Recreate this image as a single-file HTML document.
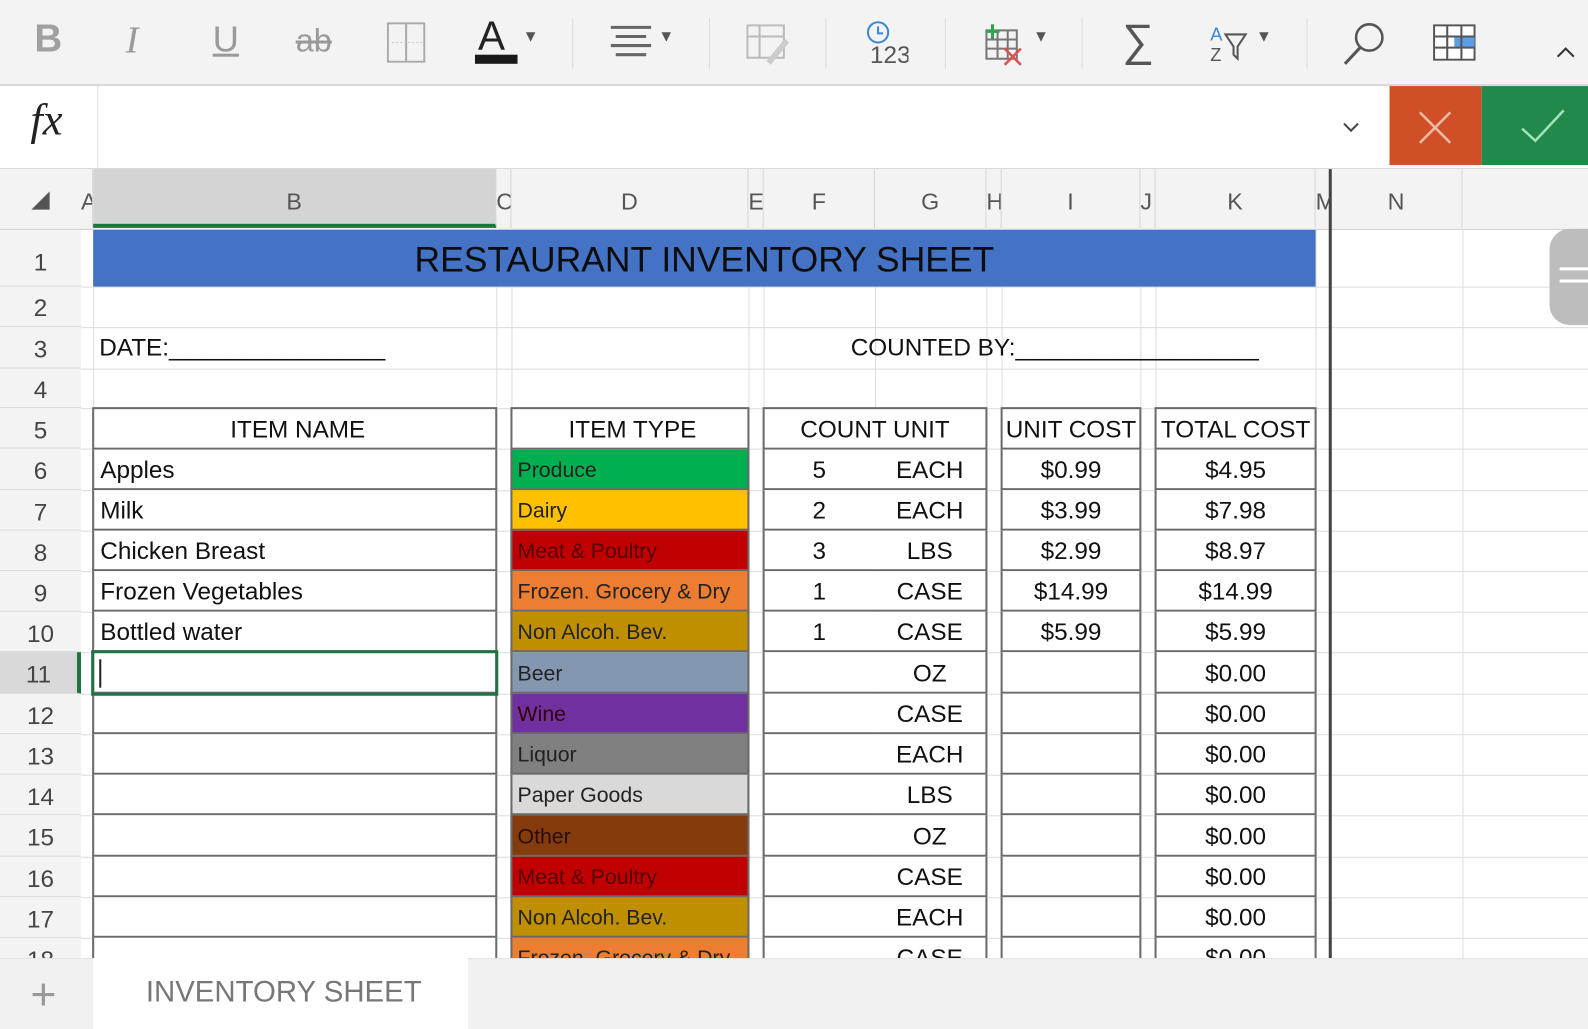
<!DOCTYPE html>
<html><head><meta charset="utf-8"><style>
*{margin:0;padding:0;box-sizing:border-box}
html,body{width:1588px;height:1029px;overflow:hidden;background:#fff}
#w{position:absolute;left:0;top:0;width:1568px;height:1016px;transform:scale(1.01276);transform-origin:0 0;font-family:"Liberation Sans",sans-serif;overflow:hidden}
.a{position:absolute}
.tb{left:0;top:0;width:1568px;height:85px;background:#f3f3f3;border-bottom:2px solid #d8d8d8}
.sep{position:absolute;top:18px;width:1px;height:50px;background:#dcdcdc}
.ic{position:absolute;color:#9a9a9a}
.fb{left:0;top:85px;width:1568px;height:82px;background:#fff;border-bottom:1px solid #d6d6d6}
.ch{left:0;top:167px;width:1568px;height:60px;background:#f3f3f3;border-bottom:1px solid #d0d0d0}
.cl{position:absolute;top:0;height:58px;line-height:64px;text-align:center;font-size:23px;color:#555;border-right:1px solid #d6d6d6}
.rh{position:absolute;left:0;width:80px;background:#f3f3f3;text-align:center;font-size:24px;color:#444;border-bottom:1px solid #d6d6d6}
.vl{position:absolute;top:227px;height:730px;width:1px;background:#dcdcdc}
.hl{position:absolute;left:80px;width:1508px;height:1px;background:#dcdcdc}
.r{position:absolute;left:0;width:1568px}
.r>div{position:absolute;top:0;height:100%;border-left:2px solid #6a6a6a;border-right:2px solid #6a6a6a;border-bottom:2px solid #6a6a6a;font-size:24px;color:#111;text-align:center;display:flex;align-items:center;justify-content:center;padding-top:4px;white-space:nowrap;overflow:hidden}
.r>.b{left:91px;width:400px;background:#fff;justify-content:flex-start;padding-left:6px}
.r>.d{left:504px;width:236px;justify-content:flex-start;padding-left:5px;font-size:21px;color:#222}
.r>.f{left:753px;width:112px;background:#fff}
.r>.g{left:863px;width:112px;background:#fff;border-left:none}
.r>.i{left:988px;width:139px;background:#fff}
.r>.k{left:1140px;width:160px;background:#fff}
.hd>div{border-top:2px solid #6a6a6a}
.hd>.b{justify-content:center}
.hd>.d{justify-content:center;font-size:24px;background:#fff;color:#111}
</style></head><body><div id="w">
<div class="a tb">
<div class="ic" style="left:34px;top:18px;font-size:38px;font-weight:bold;color:#a0a0a0">B</div>
<div class="ic" style="left:124px;top:18px;font-size:38px;font-style:italic;font-family:'Liberation Serif',serif">I</div>
<div class="ic" style="left:210px;top:18px;font-size:36px;text-decoration:underline">U</div>
<div class="ic" style="left:292px;top:22px;font-size:32px;text-decoration:line-through">ab</div>
<svg class="a" style="left:382px;top:22px" width="38" height="40"><rect x="1" y="1" width="36" height="38" fill="none" stroke="#aaa" stroke-width="2"/><line x1="19" y1="1" x2="19" y2="39" stroke="#aaa" stroke-width="2"/><line x1="1" y1="20" x2="37" y2="20" stroke="#ccc" stroke-dasharray="2 2"/></svg>
<div class="ic" style="left:472px;top:14px;font-size:40px;color:#222">A</div>
<div class="a" style="left:469px;top:54px;width:42px;height:9px;background:#1a1a1a"></div>
<div class="ic" style="left:516px;top:28px;font-size:16px;color:#555">▼</div>
<div class="sep" style="left:565px"></div>
<svg class="a" style="left:603px;top:25px" width="40" height="32"><g stroke="#666" stroke-width="3"><line x1="0" y1="2" x2="40" y2="2"/><line x1="5" y1="11" x2="35" y2="11"/><line x1="0" y1="20" x2="40" y2="20"/><line x1="5" y1="29" x2="35" y2="29"/></g></svg>
<div class="ic" style="left:650px;top:28px;font-size:16px;color:#555">▼</div>
<div class="sep" style="left:700px"></div>
<svg class="a" style="left:737px;top:24px" width="42" height="40"><rect x="1" y="1" width="36" height="32" fill="none" stroke="#bbb" stroke-width="2"/><line x1="1" y1="12" x2="37" y2="12" stroke="#bbb" stroke-width="2"/><line x1="13" y1="1" x2="13" y2="33" stroke="#bbb" stroke-width="2"/><path d="M20 36 L38 14 L42 18 L24 40Z" fill="#ccc"/></svg>
<div class="sep" style="left:815px"></div>
<svg class="a" style="left:853px;top:20px" width="44" height="46"><circle cx="14" cy="12" r="10" fill="none" stroke="#3a87d6" stroke-width="2"/><path d="M14 6 V13 H19" fill="none" stroke="#3a87d6" stroke-width="2"/><text x="6" y="42" font-size="24" fill="#555" font-family="Liberation Sans">123</text></svg>
<div class="sep" style="left:933px"></div>
<svg class="a" style="left:970px;top:22px" width="46" height="44"><g stroke="#777" stroke-width="2" fill="none"><rect x="4" y="8" width="30" height="28"/><line x1="4" y1="17" x2="34" y2="17"/><line x1="4" y1="26" x2="34" y2="26"/><line x1="15" y1="8" x2="15" y2="36"/><line x1="25" y1="8" x2="25" y2="36"/></g><path d="M10 2 V16 M3 9 H17" stroke="#2ea44f" stroke-width="3"/><path d="M22 26 L38 42 M38 26 L22 42" stroke="#e05050" stroke-width="2.5"/></svg>
<div class="ic" style="left:1020px;top:28px;font-size:16px;color:#555">▼</div>
<div class="sep" style="left:1068px"></div>
<div class="ic" style="left:1108px;top:16px;font-size:44px;color:#555">∑</div>
<svg class="a" style="left:1193px;top:22px" width="40" height="42"><text x="2" y="18" font-size="18" fill="#3a87d6" font-family="Liberation Sans">A</text><text x="2" y="38" font-size="18" fill="#555" font-family="Liberation Sans">Z</text><path d="M17 12 H37 L29 24 V36 L25 32 V24Z" fill="none" stroke="#555" stroke-width="2"/></svg>
<div class="ic" style="left:1240px;top:28px;font-size:16px;color:#555">▼</div>
<div class="sep" style="left:1290px"></div>
<svg class="a" style="left:1325px;top:20px" width="44" height="46"><circle cx="27" cy="17" r="13" fill="none" stroke="#555" stroke-width="2.5"/><line x1="18" y1="27" x2="3" y2="43" stroke="#555" stroke-width="3"/></svg>
<svg class="a" style="left:1415px;top:24px" width="42" height="36"><rect x="1" y="1" width="40" height="34" fill="#fff" stroke="#555" stroke-width="2"/><rect x="21" y="12" width="20" height="11" fill="#5aa0e6"/><g stroke="#555" stroke-width="2"><line x1="1" y1="12" x2="41" y2="12"/><line x1="1" y1="23" x2="41" y2="23"/><line x1="14" y1="1" x2="14" y2="35"/><line x1="28" y1="1" x2="28" y2="35"/></g></svg>
<svg class="a" style="left:1536px;top:44px" width="20" height="14"><path d="M2 12 L10 4 L18 12" fill="none" stroke="#333" stroke-width="2"/></svg>
</div>
<div class="a fb">
<div class="a" style="left:30px;top:8px;font-size:44px;font-style:italic;font-family:'Liberation Serif',serif;color:#222">fx</div>
<div class="a" style="left:96px;top:0;width:1px;height:82px;background:#ddd"></div>
<svg class="a" style="left:1324px;top:34px" width="20" height="14"><path d="M3 3 L10 10 L17 3" fill="none" stroke="#444" stroke-width="2"/></svg>
<div class="a" style="left:1372px;top:0;width:91px;height:78px;background:#cf4f27"></div>
<svg class="a" style="left:1398px;top:22px" width="38" height="38"><path d="M4 4 L34 34 M34 4 L4 34" stroke="#f3b9a3" stroke-width="2.5"/></svg>
<div class="a" style="left:1463px;top:0;width:125px;height:78px;background:#218a4b"></div>
<svg class="a" style="left:1500px;top:20px" width="48" height="40"><path d="M3 22 L16 34 L44 4" fill="none" stroke="#a6e0bd" stroke-width="2.5"/></svg>
</div>
<div class="a ch">
<div class="cl" style="left:0;width:80px;border-right:none"><svg width="22" height="22" style="margin-top:20px"><path d="M20 2 V20 H2Z" fill="#555"/></svg></div>
<div class="cl" style="left:80px;width:12px;overflow:hidden;text-align:left">A</div>
<div class="cl" style="left:92px;width:398px;background:#d4d4d4;border-bottom:4px solid #217346">B</div>
<div class="cl" style="left:490px;width:15px;overflow:hidden;text-align:left">C</div>
<div class="cl" style="left:505px;width:234px">D</div>
<div class="cl" style="left:739px;width:15px;overflow:hidden;text-align:left">E</div>
<div class="cl" style="left:754px;width:110px">F</div>
<div class="cl" style="left:864px;width:110px">G</div>
<div class="cl" style="left:974px;width:15px;overflow:hidden;text-align:left">H</div>
<div class="cl" style="left:989px;width:137px">I</div>
<div class="cl" style="left:1126px;width:15px;overflow:hidden;text-align:left">J</div>
<div class="cl" style="left:1141px;width:158px">K</div>
<div class="cl" style="left:1299px;width:15px;overflow:hidden;text-align:left">M</div>
<div class="cl" style="left:1314px;width:130px">N</div>
<div class="cl" style="left:1444px;width:144px;text-align:right;overflow:hidden;border-right:none"><span style="position:relative;left:10px">C</span></div>
</div>
<div class="vl" style="left:92px"></div><div class="vl" style="left:490px"></div><div class="vl" style="left:505px"></div><div class="vl" style="left:739px"></div><div class="vl" style="left:754px"></div><div class="vl" style="left:864px"></div><div class="vl" style="left:974px"></div><div class="vl" style="left:989px"></div><div class="vl" style="left:1126px"></div><div class="vl" style="left:1141px"></div><div class="vl" style="left:1299px"></div><div class="vl" style="left:1444px"></div>
<div class="hl" style="top:283px"></div><div class="hl" style="top:323px"></div><div class="hl" style="top:364px"></div><div class="hl" style="top:403px"></div><div class="hl" style="top:443px"></div><div class="hl" style="top:484px"></div><div class="hl" style="top:524px"></div><div class="hl" style="top:564px"></div><div class="hl" style="top:604px"></div><div class="hl" style="top:644px"></div><div class="hl" style="top:685px"></div><div class="hl" style="top:725px"></div><div class="hl" style="top:765px"></div><div class="hl" style="top:805px"></div><div class="hl" style="top:846px"></div><div class="hl" style="top:886px"></div><div class="hl" style="top:926px"></div>
<div class="rh" style="top:227px;height:56px;line-height:66px">1</div>
<div class="rh" style="top:283px;height:40px;line-height:44px">2</div>
<div class="rh" style="top:323px;height:41px;line-height:46px">3</div>
<div class="rh" style="top:364px;height:39px;line-height:44px">4</div>
<div class="rh" style="top:403px;height:40px;line-height:46px">5</div>
<div class="rh" style="top:443px;height:41px;line-height:46px">6</div>
<div class="rh" style="top:484px;height:40px;line-height:46px">7</div>
<div class="rh" style="top:524px;height:40px;line-height:46px">8</div>
<div class="rh" style="top:564px;height:40px;line-height:46px">9</div>
<div class="rh" style="top:604px;height:40px;line-height:46px">10</div>
<div class="rh" style="top:644px;height:41px;line-height:46px;background:#d9d9d9;border-right:4px solid #217346">11</div>
<div class="rh" style="top:685px;height:40px;line-height:46px">12</div>
<div class="rh" style="top:725px;height:40px;line-height:46px">13</div>
<div class="rh" style="top:765px;height:40px;line-height:46px">14</div>
<div class="rh" style="top:805px;height:41px;line-height:46px">15</div>
<div class="rh" style="top:846px;height:40px;line-height:46px">16</div>
<div class="rh" style="top:886px;height:40px;line-height:46px">17</div>
<div class="rh" style="top:926px;height:40px;line-height:46px">18</div>
<div class="a" style="left:92px;top:227px;width:1207px;height:56px;background:#4472c4;text-align:center;font-size:35px;line-height:60px;color:#0d0d0d">RESTAURANT INVENTORY SHEET</div>
<div class="a" style="left:98px;top:330px;font-size:24px;color:#111">DATE:________________</div>
<div class="a" style="left:840px;top:330px;font-size:24px;color:#111">COUNTED BY:__________________</div>
<div class="r hd" style="top:402px;height:42px"><div class="b">ITEM NAME</div><div class="d">ITEM TYPE</div><div class="f" style="width:222px">COUNT UNIT</div><div class="i">UNIT COST</div><div class="k">TOTAL COST</div></div>
<div class="r" style="top:444px;height:40px"><div class="b">Apples</div><div class="d" style="background:#00b050">Produce</div><div class="f">5</div><div class="g">EACH</div><div class="i">$0.99</div><div class="k">$4.95</div></div>
<div class="r" style="top:484px;height:40px"><div class="b">Milk</div><div class="d" style="background:#ffc000">Dairy</div><div class="f">2</div><div class="g">EACH</div><div class="i">$3.99</div><div class="k">$7.98</div></div>
<div class="r" style="top:524px;height:40px"><div class="b">Chicken Breast</div><div class="d" style="background:#c00000;color:#500">Meat &amp; Poultry</div><div class="f">3</div><div class="g">LBS</div><div class="i">$2.99</div><div class="k">$8.97</div></div>
<div class="r" style="top:564px;height:40px"><div class="b">Frozen Vegetables</div><div class="d" style="background:#ed7d31">Frozen. Grocery &amp; Dry</div><div class="f">1</div><div class="g">CASE</div><div class="i">$14.99</div><div class="k">$14.99</div></div>
<div class="r" style="top:604px;height:40px"><div class="b">Bottled water</div><div class="d" style="background:#bf8f00">Non Alcoh. Bev.</div><div class="f">1</div><div class="g">CASE</div><div class="i">$5.99</div><div class="k">$5.99</div></div>
<div class="r" style="top:644px;height:41px"><div class="b"></div><div class="d" style="background:#8497b0">Beer</div><div class="f"></div><div class="g">OZ</div><div class="i"></div><div class="k">$0.00</div></div>
<div class="r" style="top:685px;height:40px"><div class="b"></div><div class="d" style="background:#7030a0;color:#300">Wine</div><div class="f"></div><div class="g">CASE</div><div class="i"></div><div class="k">$0.00</div></div>
<div class="r" style="top:725px;height:40px"><div class="b"></div><div class="d" style="background:#808080">Liquor</div><div class="f"></div><div class="g">EACH</div><div class="i"></div><div class="k">$0.00</div></div>
<div class="r" style="top:765px;height:40px"><div class="b"></div><div class="d" style="background:#d9d9d9">Paper Goods</div><div class="f"></div><div class="g">LBS</div><div class="i"></div><div class="k">$0.00</div></div>
<div class="r" style="top:805px;height:41px"><div class="b"></div><div class="d" style="background:#843c0c;color:#2a0d00">Other</div><div class="f"></div><div class="g">OZ</div><div class="i"></div><div class="k">$0.00</div></div>
<div class="r" style="top:846px;height:40px"><div class="b"></div><div class="d" style="background:#c00000;color:#500">Meat &amp; Poultry</div><div class="f"></div><div class="g">CASE</div><div class="i"></div><div class="k">$0.00</div></div>
<div class="r" style="top:886px;height:40px"><div class="b"></div><div class="d" style="background:#bf8f00">Non Alcoh. Bev.</div><div class="f"></div><div class="g">EACH</div><div class="i"></div><div class="k">$0.00</div></div>
<div class="r" style="top:926px;height:40px"><div class="b"></div><div class="d" style="background:#ed7d31">Frozen. Grocery &amp; Dry</div><div class="f"></div><div class="g">CASE</div><div class="i"></div><div class="k">$0.00</div></div>
<div class="a" style="left:90px;top:642px;width:402px;height:45px;border:3px solid #217346"></div>
<div class="a" style="left:98px;top:651px;width:2px;height:28px;background:#222"></div>
<div class="a" style="left:1312px;top:167px;width:3px;height:790px;background:#444"></div>
<div class="a" style="left:1530px;top:226px;width:60px;height:95px;background:#bdbdbd;border-radius:20px"></div>
<div class="a" style="left:1540px;top:264px;width:30px;height:3px;background:#fff"></div>
<div class="a" style="left:1540px;top:276px;width:30px;height:3px;background:#fff"></div>
<div class="a" style="left:0;top:946px;width:1588px;height:83px;background:#f1f1f1;border-top:1px solid #e2e2e2"></div>
<div class="a" style="left:92px;top:946px;width:370px;height:83px;background:#fff"></div>
<div class="a" style="left:30px;top:958px;font-size:44px;color:#999">+</div>
<div class="a" style="left:144px;top:964px;font-size:29px;color:#777">INVENTORY SHEET</div>
</div></body></html>
